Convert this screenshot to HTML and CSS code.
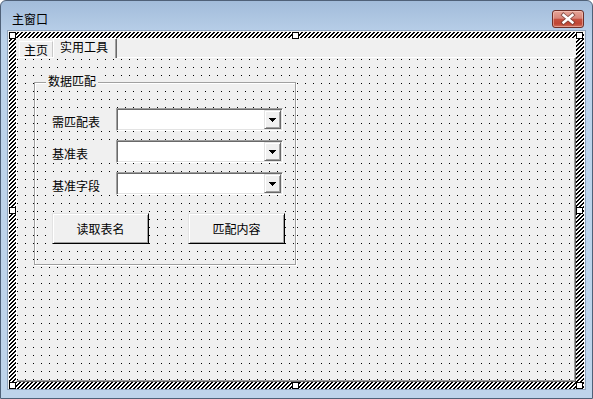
FILE: index.html
```html
<!DOCTYPE html>
<html lang="zh">
<head>
<meta charset="utf-8">
<title>主窗口</title>
<link rel="stylesheet" href="styles.css">
</head>
<body>
<div class="window">
  <div class="titlebar">
    <span class="title">主窗口</span>
    <div class="close">
      <svg width="30" height="16" viewBox="0 0 30 16">
        <path d="M10.5 4 L19.5 11.5 M19.5 4 L10.5 11.5" stroke="#6b3a33" stroke-width="4.2" stroke-linecap="square" fill="none" opacity="0.75"/>
        <path d="M10.5 4 L19.5 11.5 M19.5 4 L10.5 11.5" stroke="#ffffff" stroke-width="2.4" stroke-linecap="square" fill="none"/>
      </svg>
    </div>
  </div>
  <div class="client">
    <div class="designer">
      <div class="form">
        <div class="tabs">
          <div class="tab">主页</div>
          <div class="tab active">实用工具</div>
        </div>
        <div class="page dots">
          <div class="frame dots">
            <span class="caption">数据匹配</span>
            <div class="rows">
              <div class="row">
                <span class="lbl">需匹配表</span>
                <div class="combo"><div class="drop"><svg width="7" height="4" viewBox="0 0 7 4" shape-rendering="crispEdges"><path d="M0 0H7V1H6V2H5V3H4V4H3V3H2V2H1V1H0Z" fill="#000"/></svg></div></div>
              </div>
              <div class="row">
                <span class="lbl">基准表</span>
                <div class="combo"><div class="drop"><svg width="7" height="4" viewBox="0 0 7 4" shape-rendering="crispEdges"><path d="M0 0H7V1H6V2H5V3H4V4H3V3H2V2H1V1H0Z" fill="#000"/></svg></div></div>
              </div>
              <div class="row">
                <span class="lbl">基准字段</span>
                <div class="combo"><div class="drop"><svg width="7" height="4" viewBox="0 0 7 4" shape-rendering="crispEdges"><path d="M0 0H7V1H6V2H5V3H4V4H3V3H2V2H1V1H0Z" fill="#000"/></svg></div></div>
              </div>
            </div>
            <div class="buttons">
              <div class="btn">读取表名</div>
              <div class="btn">匹配内容</div>
            </div>
          </div>
        </div>
      </div>
      <span class="handle h-tl"></span>
      <span class="handle h-tm"></span>
      <span class="handle h-tr"></span>
      <span class="handle h-ml"></span>
      <span class="handle h-mr"></span>
      <span class="handle h-bl"></span>
      <span class="handle h-bm"></span>
      <span class="handle h-br"></span>
    </div>
  </div>
</div>
</body>
</html>
```
FILE: styles.css
```css
html, body {
  margin: 0;
  padding: 0;
}
body {
  width: 593px;
  height: 399px;
  overflow: hidden;
  background: #ffffff;
  font-family: "Noto Sans CJK SC", "Noto Sans", sans-serif;
  font-size: 12px;
  color: #000;
}
.window {
  box-sizing: border-box;
  width: 593px;
  height: 399px;
  border: 1px solid #4f6178;
  border-radius: 6px 6px 0 0;
  background: linear-gradient(to bottom, #a2bcda 0px, #b6cde7 29px, #bcd3eb 40px, #bed4eb 100%);
  display: flex;
  flex-direction: column;
  padding: 0 6px 8px 6px;
}
.titlebar {
  height: 29px;
  flex: none;
  display: flex;
  justify-content: space-between;
  align-items: flex-start;
}
.title {
  margin-top: 10px;
  margin-left: 5px;
  line-height: 16px;
  font-size: 12px;
}
.close {
  box-sizing: border-box;
  width: 32px;
  height: 18px;
  margin-top: 9px;
  margin-right: 2px;
  border: 1px solid #6e2f28;
  border-radius: 3px;
  background: linear-gradient(to bottom, #e6a597 0%, #d8867a 45%, #c5503f 52%, #c04634 80%, #d0705e 100%);
  box-shadow: inset 0 0 0 1px rgba(255, 220, 210, 0.45);
  display: flex;
  align-items: center;
  justify-content: center;
}
.close svg {
  display: block;
}
.client {
  flex: 1;
  border: 1px solid #8ea3bc;
  background: #f0f0f0;
  padding: 1px 1px 0 1px;
  display: flex;
}
.designer {
  position: relative;
  flex: 1;
  display: flex;
  padding: 6px 8px 7px 7px;
  background-image: linear-gradient(135deg, #000 25%, #fff 25%, #fff 50%, #000 50%, #000 75%, #fff 75%);
  background-size: 4px 4px;
}
.form {
  flex: 1;
  background: #f0f0f0;
  display: flex;
  flex-direction: column;
}
.tabs {
  height: 19px;
  flex: none;
  display: flex;
  align-items: flex-end;
  padding-left: 3px;
}
.tab {
  box-sizing: border-box;
  height: 16px;
  padding: 0 4px;
  border-top: 1px solid #fff;
  border-left: 1px solid #fff;
  border-right: 1px solid #c8c8c8;
  line-height: 16px;
  white-space: nowrap;
}
.tab.active {
  position: relative;
  z-index: 1;
  height: 20px;
  margin-bottom: -1px;
  padding: 0 8px 0 6px;
  background: #f0f0f0;
  border-right: 1px solid #696969;
  box-shadow: inset -1px 0 0 #a0a0a0;
  line-height: 16px;
}
.dots {
  background-color: #000;
  background-image: linear-gradient(to right, transparent 1px, #f0f0f0 1px), linear-gradient(to bottom, transparent 1px, #f0f0f0 1px);
  background-size: 8px 8px;
}
.page {
  flex: 1;
  border: 1px solid;
  border-color: #fff #696969 #696969 #fff;
  box-shadow: inset -1px -1px 0 #a0a0a0;
  background-position: 0 1px;
  display: flex;
  flex-direction: column;
  align-items: flex-start;
}
.frame {
  position: relative;
  box-sizing: border-box;
  width: 262px;
  height: 183px;
  margin: 24px 0 0 17px;
  border: 1px solid #a0a0a0;
  box-shadow: inset 1px 1px 0 #fff, 1px 1px 0 #fff;
  background-position: 2px 0;
  padding: 25px 0 0 13px;
}
.caption {
  position: absolute;
  top: -9px;
  left: 11px;
  padding: 0 2px;
  background: #f0f0f0;
  line-height: 14px;
}
.rows {
  display: flex;
  flex-direction: column;
  gap: 9px;
}
.row {
  display: flex;
  align-items: flex-start;
  gap: 6px;
  height: 23px;
}
.lbl {
  box-sizing: border-box;
  width: 62px;
  height: 18px;
  margin-top: 5px;
  padding-left: 4px;
  background: #f0f0f0;
  line-height: 18px;
  white-space: nowrap;
}
.combo {
  box-sizing: border-box;
  width: 167px;
  height: 23px;
  border: 1px solid;
  border-color: #a0a0a0 #fff #fff #a0a0a0;
  box-shadow: inset 1px 1px 0 #696969, inset -1px -1px 0 #e3e3e3;
  background: #fff;
  padding: 1px 1px 1px 2px;
  display: flex;
  justify-content: flex-end;
}
.drop {
  box-sizing: border-box;
  width: 17px;
  height: 19px;
  background: #f0f0f0;
  border: 1px solid;
  border-color: #e3e3e3 #696969 #696969 #e3e3e3;
  box-shadow: inset 1px 1px 0 #fff, inset -1px -1px 0 #a0a0a0;
  display: flex;
  align-items: center;
  justify-content: center;
}
.drop svg {
  display: block;
  margin-top: 1px;
}
.buttons {
  display: flex;
  gap: 39px;
  margin-top: 18px;
  margin-left: 4px;
}
.btn {
  box-sizing: border-box;
  width: 97px;
  height: 31px;
  border: 1px solid;
  border-color: #e3e3e3 #000 #000 #e3e3e3;
  box-shadow: inset 1px 1px 0 #fff, inset -1px -1px 0 #a0a0a0;
  background: #f0f0f0;
  display: flex;
  align-items: center;
  justify-content: center;
  line-height: 16px;
  padding-top: 1px;
}
.handle {
  position: absolute;
  box-sizing: border-box;
  width: 7px;
  height: 7px;
  border: 1px solid #000;
  background: #fff;
}
.h-tl { left: 0; top: 0; }
.h-tm { left: 283px; top: 0; }
.h-tr { left: 567px; top: 0; }
.h-ml { left: 0; top: 175px; }
.h-mr { left: 567px; top: 175px; }
.h-bl { left: 0; top: 350px; }
.h-bm { left: 283px; top: 350px; }
.h-br { left: 567px; top: 350px; }
```
